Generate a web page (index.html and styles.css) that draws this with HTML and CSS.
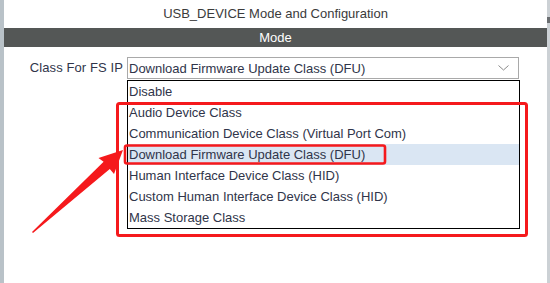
FILE: index.html
```html
<!DOCTYPE html>
<html lang="en">
<head>
  <meta charset="UTF-8">
  <title>USB_DEVICE Mode and Configuration</title>
  <link rel="stylesheet" href="styles.css">
</head>
<body>
  <div id="frame">
    <div class="edge-left"></div>
    <div id="panel">
      <div class="title">USB_DEVICE Mode and Configuration</div>
      <div class="section-bar">Mode</div>
      <div class="field-row">
        <label class="field-label">Class For FS IP</label>
        <div class="combo">
          <div class="combo-box">
            <span>Download Firmware Update Class (DFU)</span>
            <svg class="chevron" width="11" height="6" viewBox="0 0 11 6">
              <path d="M0.5 0.5 L5.5 5 L10.5 0.5" fill="none" stroke="#8a8a8a" stroke-width="1"/>
            </svg>
          </div>
          <ul class="combo-list">
            <li>Disable</li>
            <li>Audio Device Class</li>
            <li>Communication Device Class (Virtual Port Com)</li>
            <li class="selected">Download Firmware Update Class (DFU)</li>
            <li>Human Interface Device Class (HID)</li>
            <li>Custom Human Interface Device Class (HID)</li>
            <li>Mass Storage Class</li>
          </ul>
        </div>
      </div>
    </div>
    <div class="edge-right"><div class="thumb"></div></div>
  </div>

  <!-- screenshot annotations drawn on top -->
  <svg id="marks" width="550" height="283" viewBox="0 0 550 283">
    <rect x="117.5" y="103.5" width="409" height="132" rx="2" fill="none" stroke="#f5191c" stroke-width="3"/>
    <rect x="125" y="145.5" width="260" height="18" rx="2" fill="none" stroke="#f5191c" stroke-width="2.6"/>
    <polygon points="123,150 114,174 109.8,169 33,233 32,232 103.6,161.8 98.5,158" fill="#f5191c"/>
  </svg>
</body>
</html>
```

FILE: styles.css
```css
body {
  margin: 0;
  padding: 0;
  background-color: #fff;
  font-family: "Liberation Sans", Arial, sans-serif;
  font-size: 13px;
  color: #30354a;
}

#frame {
  display: flex;
  width: 550px;
  height: 283px;
  overflow: hidden;
}

.edge-left {
  width: 4px;
  background-color: #b9c2c8;
}

.edge-right {
  width: 3px;
  background-color: #ccd1d5;
}

.edge-right .thumb {
  margin-top: 17px;
  height: 6px;
  background-color: #6a6d70;
}

#panel {
  flex: 1;
  display: flex;
  flex-direction: column;
}

.title {
  height: 28px;
  line-height: 28px;
  text-align: center;
  color: #3b3b3b;
}

.section-bar {
  height: 19px;
  line-height: 19px;
  text-align: center;
  color: #fff;
  background-color: #545756;
}

.field-row {
  display: flex;
  padding-top: 10px;
}

.field-label {
  width: 119px;
  padding-right: 4px;
  text-align: right;
  line-height: 22px;
  letter-spacing: 0.1px;
}

.combo {
  width: 393px;
}

.combo-box {
  display: flex;
  align-items: center;
  justify-content: space-between;
  width: 392px;
  height: 22px;
  box-sizing: border-box;
  border: 1px solid #a9a9a9;
  padding: 0 9px 0 1px;
}

.combo-list {
  list-style: none;
  margin: 1px 0 0 0;
  padding: 0;
  border: 1px solid #000;
  background-color: #fff;
}

.combo-list li {
  height: 21px;
  line-height: 21px;
  padding-left: 1px;
}

.combo-list li.selected {
  background-color: #dae6f3;
}

#marks {
  position: absolute;
  top: 0;
  left: 0;
  pointer-events: none;
}
```
